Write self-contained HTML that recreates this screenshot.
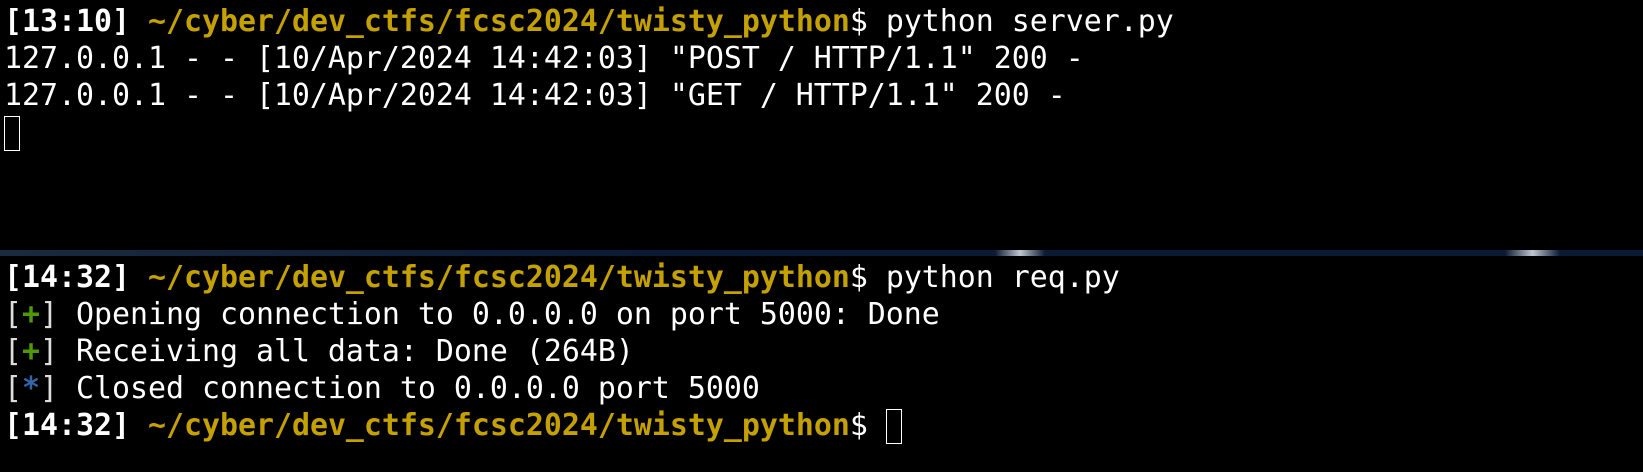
<!DOCTYPE html>
<html><head><meta charset="utf-8"><style>
html,body{margin:0;padding:0;background:#000;width:1643px;height:472px;overflow:hidden}
.t{position:absolute;left:4px;font-family:"DejaVu Sans Mono","Liberation Mono",monospace;font-size:29.9px;letter-spacing:0px;line-height:37px;color:#fff;white-space:pre}
.b{font-weight:bold}
.y{color:#c4a000;font-weight:bold}
.g{color:#4e9a06;font-weight:bold}
.u{color:#3465a4;font-weight:bold}
.gr{color:#ddd}
.cur{display:inline-block;width:16px;height:35px;border:1px solid #fff;vertical-align:-9px;box-sizing:border-box}
.band{position:absolute;left:0;top:250px;width:1643px;height:6px;background:linear-gradient(90deg,#1a2a40 0%,#0b1a35 40%,#0b1a35 100%)}
.w{position:absolute;top:250px;height:6px;background:linear-gradient(90deg,rgba(255,255,255,0),#bfc7d0,rgba(255,255,255,0))}
</style></head><body>
<div class="t" style="top:3px"><span class="b">[13:10]</span> <span class="y">~/cyber/dev_ctfs/fcsc2024/twisty_python</span>$ python server.py
127.0.0.1 - - [10/Apr/2024 14:42:03] "POST / HTTP/1.1" 200 -
127.0.0.1 - - [10/Apr/2024 14:42:03] "GET / HTTP/1.1" 200 -
<span class="cur"></span></div>
<div class="band"></div>
<div class="w" style="left:995px;width:50px"></div>
<div class="w" style="left:1505px;width:55px"></div>
<div class="t" style="top:259px"><span class="b">[14:32]</span> <span class="y">~/cyber/dev_ctfs/fcsc2024/twisty_python</span>$ python req.py
<span class="gr">[</span><span class="g">+</span><span class="gr">]</span> Opening connection to 0.0.0.0 on port 5000: Done
<span class="gr">[</span><span class="g">+</span><span class="gr">]</span> Receiving all data: Done (264B)
<span class="gr">[</span><span class="u">*</span><span class="gr">]</span> Closed connection to 0.0.0.0 port 5000
<span class="b">[14:32]</span> <span class="y">~/cyber/dev_ctfs/fcsc2024/twisty_python</span>$ <span class="cur"></span></div>
</body></html>
